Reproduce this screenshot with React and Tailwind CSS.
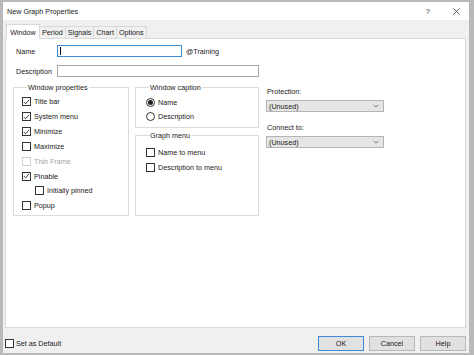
import React from "react";

const Check = ({ checked, disabled }) => (
  <span
    className={`flex h-[9px] w-[9px] shrink-0 items-center justify-center border bg-white ${
      disabled ? "border-[#cfcfcf]" : "border-[#333333]"
    }`}
  >
    {checked && (
      <svg viewBox="0 0 9 9" className="h-[8px] w-[8px]">
        <path d="M1.2 4.6 L3.4 6.9 L7.9 1.6" fill="none" stroke="#222" strokeWidth="1.1" />
      </svg>
    )}
  </span>
);

const Radio = ({ checked }) => (
  <span className="flex h-[9px] w-[9px] shrink-0 items-center justify-center rounded-full border border-[#333333] bg-white">
    {checked && <span className="h-[5px] w-[5px] rounded-full bg-[#222222]" />}
  </span>
);

const CheckRow = ({ label, checked, disabled, indent }) => (
  <div className={`flex h-[14.85px] items-center gap-[3px] ${indent ? "pl-[13px]" : ""}`}>
    <Check checked={checked} disabled={disabled} />
    <span className={disabled ? "text-[#a3a3a3]" : ""}>{label}</span>
  </div>
);

const Group = ({ title, className, children }) => (
  <fieldset className={`border border-[#dcdcdc] pl-[8px] ${className}`}>
    <legend className="ml-[5px] px-[1px] leading-[9px]">{title}</legend>
    {children}
  </fieldset>
);

const Select = () => (
  <div className="flex h-[12px] w-[118px] items-center justify-between border border-[#b4b4b4] bg-[#e5e5e5] pl-[2px] pr-[4px]">
    <span>(Unused)</span>
    <svg viewBox="0 0 8 5" className="h-[4px] w-[6px]">
      <path d="M1 1 L4 4 L7 1" fill="none" stroke="#555" strokeWidth="1" />
    </svg>
  </div>
);

const Button = ({ label, primary }) => (
  <div
    className={`flex h-[15px] w-[46px] items-center justify-center border bg-[#e1e1e1] ${
      primary ? "border-[#3c8ad8]" : "border-[#b8b8b8]"
    }`}
  >
    {label}
  </div>
);

const tabs = ["Period", "Signals", "Chart", "Options"];

export default function App() {
  return (
    <div className="h-[355px] w-[474px] overflow-hidden bg-[#b9b9b9] pb-[2px] pl-[3px] pr-[5px] pt-[2px] font-['Liberation_Sans',Arial,sans-serif] text-[7.2px] leading-[9px] text-[#202020]">
      <div className="flex h-full flex-col bg-[#f0f0f0]">
        {/* title bar */}
        <div className="flex h-[18px] items-center bg-white pl-[4px] pr-[9px]">
          <span>New Graph Properties</span>
          <span className="ml-auto mr-[23px] text-[8px] text-[#333]">?</span>
          <svg viewBox="0 0 8 8" className="h-[7px] w-[7px]">
            <path d="M0.5 0.5 L7.5 7.5 M7.5 0.5 L0.5 7.5" stroke="#333" strokeWidth="0.9" />
          </svg>
        </div>

        {/* tabs */}
        <div className="ml-[3px] flex h-[18px] items-end pt-[4px]">
          <div className="relative z-10 -mb-px flex h-[15px] w-[34px] items-center justify-center border border-b-0 border-[#d9d9d9] bg-white">
            Window
          </div>
          {tabs.map((t) => (
            <div
              key={t}
              className="-ml-px flex h-[12px] items-center border border-b-0 border-[#d9d9d9] bg-[#f0f0f0] px-[2px]"
            >
              {t}
            </div>
          ))}
        </div>

        {/* panel */}
        <div className="ml-[2px] mr-[3px] flex h-[290px] flex-col border border-[#d9d9d9] bg-white pl-[7px] pt-[6px]">
          <div className="ml-[3px] flex h-[12px] items-center">
            <span className="w-[41px]">Name</span>
            <div className="flex h-[12px] w-[125px] items-center border border-[#3c8ad8] pl-[2px]">
              <span className="h-[8px] w-px bg-black" />
            </div>
            <span className="ml-[4px]">@Training</span>
          </div>
          <div className="ml-[3px] mt-[8px] flex h-[12px] items-center">
            <span className="w-[41px]">Description</span>
            <div className="h-[12px] w-[202px] border border-[#a8a8a8]" />
          </div>

          <div className="mt-[6px] flex items-start">
            <Group title="Window properties" className="h-[133px] w-[116px] pt-[2.5px]">
              <CheckRow label="Title bar" checked />
              <CheckRow label="System menu" checked />
              <CheckRow label="Minimize" checked />
              <CheckRow label="Maximize" />
              <CheckRow label="Thin Frame" disabled />
              <CheckRow label="Pinable" checked />
              <CheckRow label="Initially pinned" indent />
              <CheckRow label="Popup" />
            </Group>

            <div className="ml-[6px] flex w-[124px] flex-col">
              <Group title="Window caption" className="h-[45px] pt-[3px]">
                <div className="flex h-[14.5px] items-center gap-[3px] pl-[2px]">
                  <Radio checked />
                  <span>Name</span>
                </div>
                <div className="flex h-[14.5px] items-center gap-[3px] pl-[2px]">
                  <Radio />
                  <span>Description</span>
                </div>
              </Group>
              <Group title="Graph menu" className="mt-[3px] h-[85px] pt-[4.5px]">
                <div className="flex h-[15px] items-center gap-[3px] pl-[2px]">
                  <Check />
                  <span>Name to menu</span>
                </div>
                <div className="flex h-[15px] items-center gap-[3px] pl-[2px]">
                  <Check />
                  <span>Description to menu</span>
                </div>
              </Group>
            </div>

            <div className="ml-[7px] flex flex-col pt-[4px]">
              <span className="pl-px">Protection:</span>
              <div className="mt-[4px]">
                <Select />
              </div>
              <span className="mt-[11px] pl-px">Connect to:</span>
              <div className="mt-[4px]">
                <Select />
              </div>
            </div>
          </div>
        </div>

        {/* footer */}
        <div className="flex flex-1 items-start pl-[2px] pr-[3px] pt-[8px]">
          <div className="mt-[3px] flex items-center gap-[2px]">
            <Check />
            <span>Set as Default</span>
          </div>
          <div className="ml-auto flex gap-[5px]">
            <Button label="OK" primary />
            <Button label="Cancel" />
            <Button label="Help" />
          </div>
        </div>
      </div>
    </div>
  );
}
